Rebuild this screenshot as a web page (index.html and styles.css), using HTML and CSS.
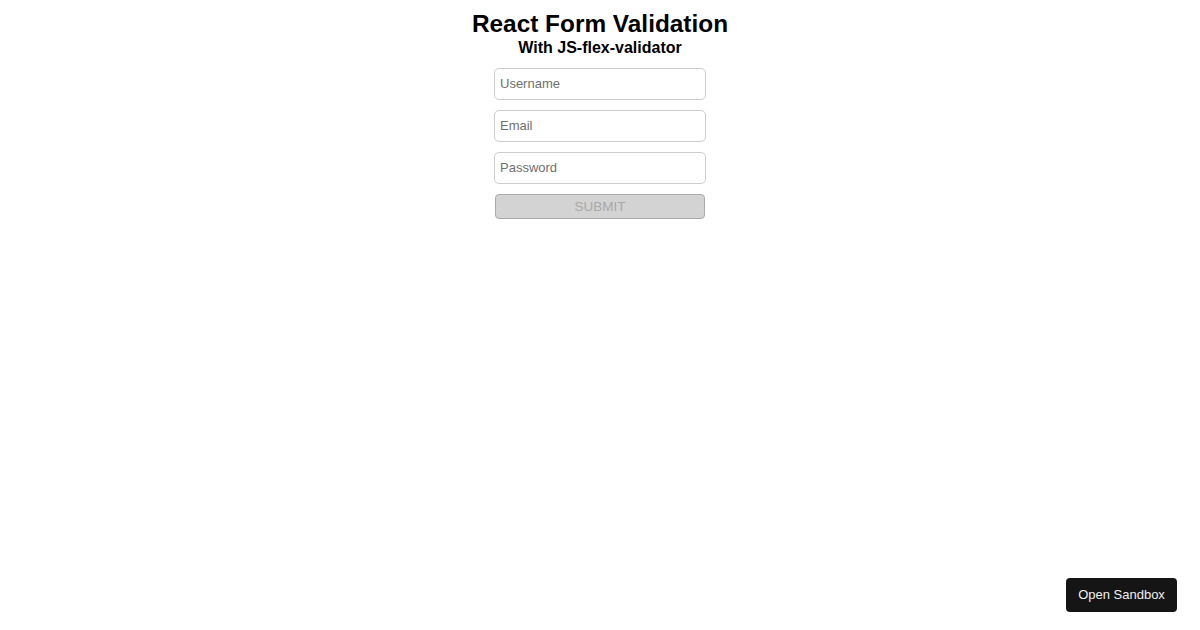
FILE: index.html
```html
<!DOCTYPE html>
<html>
<head>
<meta charset="utf-8">
<link rel="stylesheet" href="styles.css">
</head>
<body>
<div class="app">
  <h1 class="title">React Form Validation</h1>
  <h2 class="subtitle">With JS-flex-validator</h2>
  <form class="form">
    <input class="field" type="text" placeholder="Username">
    <input class="field" type="email" placeholder="Email">
    <input class="field" type="password" placeholder="Password">
    <button class="submit" type="button" disabled>SUBMIT</button>
  </form>
</div>
<a class="sandbox-btn">Open Sandbox</a>
</body>
</html>
```
FILE: styles.css
```css
html, body {
  margin: 0;
  padding: 0;
  background: #fff;
  font-family: "Liberation Sans", Arial, sans-serif;
}
.app {
  display: flex;
  flex-direction: column;
  align-items: center;
  padding-top: 9px;
}
.title {
  margin: 0;
  font-size: 24.4px;
  line-height: 30px;
  font-weight: bold;
  color: #000;
}
.subtitle {
  margin: 0;
  font-size: 16px;
  line-height: 18px;
  font-weight: bold;
  color: #000;
}
.form {
  display: flex;
  flex-direction: column;
  align-items: center;
  gap: 10px;
  margin-top: 11px;
}
.field {
  box-sizing: border-box;
  width: 212px;
  height: 32px;
  border: 1px solid #ccc;
  border-radius: 5px;
  padding: 0 5px 1px;
  font-family: "Liberation Sans", Arial, sans-serif;
  font-size: 13px;
  color: #333;
  outline: none;
}
.field::placeholder {
  color: #6f6f6f;
}
.submit {
  box-sizing: border-box;
  width: 210px;
  height: 25px;
  background: #d3d3d3;
  border: 1px solid #aaa;
  border-radius: 4px;
  color: #a9a9a9;
  font-family: "Liberation Sans", Arial, sans-serif;
  font-size: 13.5px;
  padding: 0 0 1px;
}
.sandbox-btn {
  position: fixed;
  right: 23px;
  bottom: 18px;
  width: 111px;
  height: 34px;
  box-sizing: border-box;
  display: flex;
  align-items: center;
  justify-content: center;
  padding-bottom: 2px;
  background: #151515;
  border-radius: 4px;
  color: #f0f0f0;
  font-family: "Liberation Sans", Arial, sans-serif;
  font-size: 13px;
}
```
